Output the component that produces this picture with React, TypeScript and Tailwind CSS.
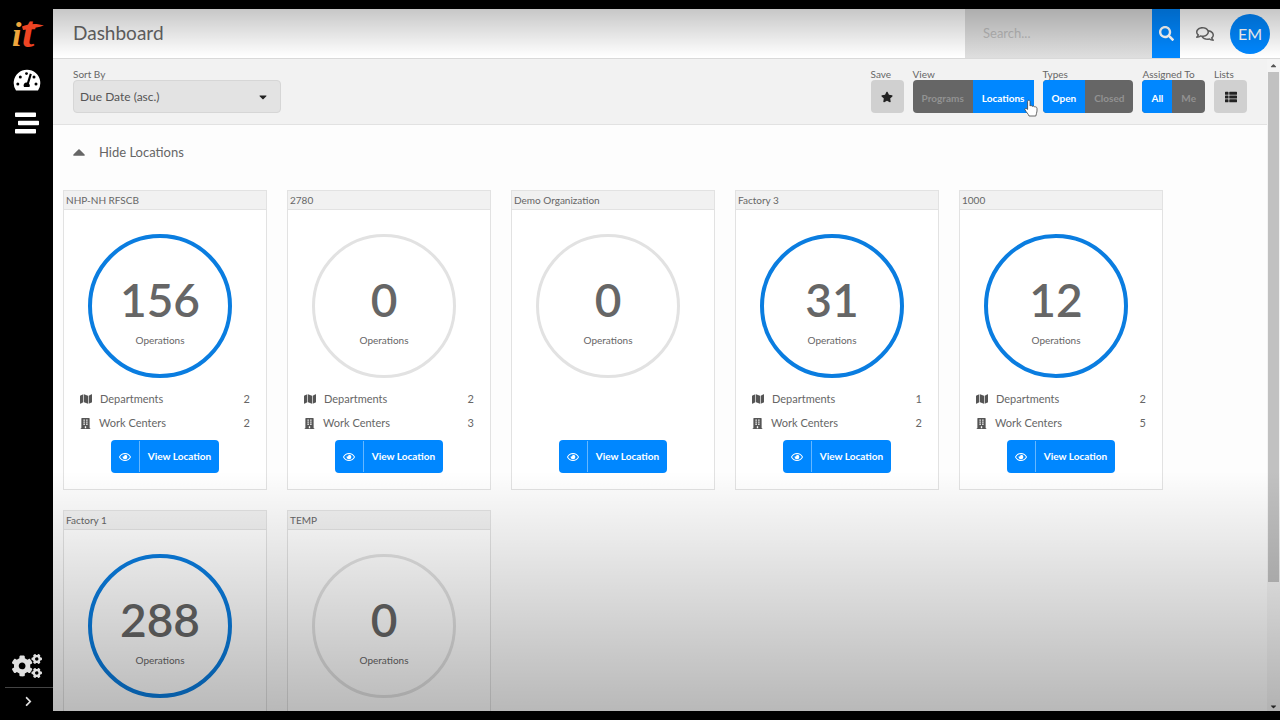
import type { ReactNode } from 'react';
import clsx from 'clsx';
import {
  FaBuilding,
  FaCaretDown,
  FaCaretUp,
  FaChevronRight,
  FaCogs,
  FaMap,
  FaRegComments,
  FaRegEye,
  FaSearch,
  FaStar,
  FaStream,
  FaThList,
} from 'react-icons/fa';

interface Location {
  name: string;
  operations: number;
  departments?: number;
  workCenters?: number;
}

const LOCATIONS: Location[] = [
  { name: 'NHP-NH RFSCB', operations: 156, departments: 2, workCenters: 2 },
  { name: '2780', operations: 0, departments: 2, workCenters: 3 },
  { name: 'Demo Organization', operations: 0 },
  { name: 'Factory 3', operations: 31, departments: 1, workCenters: 2 },
  { name: '1000', operations: 12, departments: 2, workCenters: 5 },
  { name: 'Factory 1', operations: 288 },
  { name: 'TEMP', operations: 0 },
];

function Logo() {
  return (
    <svg viewBox="0 0 36 48" className="h-12 w-9" role="img" aria-label="it">
      <g fontFamily="'Liberation Serif', serif" fontStyle="italic" fontWeight="700">
        <text x="3" y="37" fontSize="34" fill="#f0a63c">
          i
        </text>
        <text x="13" y="38" fontSize="44" fill="#ee4423">
          t
        </text>
      </g>
      <path d="M13 17.500C19 14.500 28 14 35 16.500C31 18 22 19.500 14 21Z" fill="#ee4423" />
    </svg>
  );
}

function GaugeIcon() {
  return (
    <svg viewBox="0 0 28 22" className="h-[22px] w-7" aria-hidden="true">
      <path d="M3 21.500A13.300 13.300 0 1 1 25 21.500Z" fill="#fff" />
      <g fill="#000">
        <circle cx="4.800" cy="15" r="1.500" />
        <circle cx="7.300" cy="8" r="1.500" />
        <circle cx="13.500" cy="4.600" r="1.400" />
        <circle cx="21" cy="8" r="1.500" />
        <circle cx="23" cy="15" r="1.500" />
        <path d="M16.800 4.500L18.800 5.200L16 14.500A3 3 0 0 1 16.500 18H11A3 3 0 0 1 14 13.500Z" />
      </g>
    </svg>
  );
}

function PointerHand() {
  return (
    <svg viewBox="0 0 14 18" className="pointer-events-none absolute -right-1 -bottom-1 h-[18px] w-3.5" aria-hidden="true">
      <path
        d="M4 1.500C5 .8 6 1.500 6 2.500V7C6.500 6.300 8 6.400 8.300 7.400C9 6.800 10.300 7 10.600 8C11.500 7.500 13 8 13 9.500V12C13 14 12 15 11.800 17H5C4.500 15 2 13 1 10.800C.5 9.500 2 8.800 3.600 10.400V2.500C3.600 2 3.700 1.700 4 1.500Z"
        fill="#fff"
        stroke="#444"
        strokeWidth=".8"
      />
    </svg>
  );
}

function Sidebar() {
  return (
    <nav className="flex w-[53px] shrink-0 flex-col items-center bg-black text-white">
      <a href="#home">
        <Logo />
      </a>
      <a href="#dashboard" aria-label="Dashboard" className="mt-3">
        <GaugeIcon />
      </a>
      <a href="#programs" aria-label="Programs" className="mt-5">
        <FaStream size={24} />
      </a>
      <a href="#settings" aria-label="Settings" className="mt-auto mb-1.5 text-[#e0e0e0]">
        <FaCogs size={30} />
      </a>
      <button
        aria-label="Expand menu"
        className="ml-1 flex h-6 w-12 items-center justify-center border-t border-[#444] pt-1 text-[#e0e0e0]"
      >
        <FaChevronRight size={11} />
      </button>
    </nav>
  );
}

function Header() {
  return (
    <header className="flex h-[50px] shrink-0 items-center border-b border-[#d9d9d9] bg-white pr-2.5 pl-5">
      <h1 className="text-[19px] text-[#666]">Dashboard</h1>
      <div className="ml-auto flex self-stretch">
        <input
          type="search"
          aria-label="Search"
          placeholder="Search..."
          className="w-[187px] bg-[#dedede] px-[18px] text-[13px] outline-none placeholder:text-[#b9b9b9]"
        />
        <button aria-label="Search" className="flex w-7 items-center justify-center bg-[#0087ff] text-white">
          <FaSearch size={15} />
        </button>
      </div>
      <button aria-label="Messages" className="mx-4 text-[#666]">
        <FaRegComments size={18} />
      </button>
      <button className="size-10 rounded-full bg-[#0087ff] text-[16px] text-white">EM</button>
    </header>
  );
}

function Field({ label, children }: { label: string; children: ReactNode }) {
  return (
    <div role="group" aria-label={label}>
      <div className="text-[10px] leading-3 text-[#666]">{label}</div>
      {children}
    </div>
  );
}

function Segmented({ options, active, children }: { options: string[]; active: string; children?: ReactNode }) {
  return (
    <div className="relative flex h-[33px] rounded bg-[#666]">
      {options.map((option) => (
        <button
          key={option}
          aria-pressed={option === active}
          className={clsx(
            'px-[9px] pt-1 text-[10px] font-bold first:rounded-l last:rounded-r',
            option === active ? 'bg-[#0087ff] text-white' : 'text-[#929292]',
          )}
        >
          {option}
        </button>
      ))}
      {children}
    </div>
  );
}

function Toolbar() {
  return (
    <div className="flex justify-between border-b border-[#e2e2e2] bg-[#f2f2f2] px-5 pt-[9px] pb-[11px]">
      <div>
        <label htmlFor="sort" className="block text-[10px] leading-3 text-[#666]">
          Sort By
        </label>
        <div className="relative">
          <select
            id="sort"
            className="h-[33px] w-[208px] appearance-none rounded border border-[#d6d6d6] bg-[#e3e3e3] px-1.5 text-[12px] text-[#555]"
          >
            <option>Due Date (asc.)</option>
          </select>
          <FaCaretDown size={12} className="pointer-events-none absolute top-[11px] right-3 text-[#222]" />
        </div>
      </div>
      <div className="flex gap-[9px]">
        <Field label="Save">
          <button aria-label="Save" className="flex h-[33px] w-[33px] items-center justify-center rounded bg-[#d0d0d0] text-[#222]">
            <FaStar size={12} />
          </button>
        </Field>
        <Field label="View">
          <Segmented options={['Programs', 'Locations']} active="Locations">
            <PointerHand />
          </Segmented>
        </Field>
        <Field label="Types">
          <Segmented options={['Open', 'Closed']} active="Open" />
        </Field>
        <Field label="Assigned To">
          <Segmented options={['All', 'Me']} active="All" />
        </Field>
        <Field label="Lists">
          <button aria-label="Lists" className="flex h-[33px] w-[33px] items-center justify-center rounded bg-[#d0d0d0] text-[#222]">
            <FaThList size={12} />
          </button>
        </Field>
      </div>
    </div>
  );
}

function LocationCard({ name, operations, departments, workCenters }: Location) {
  return (
    <article className="flex h-[300px] w-[204px] flex-col border border-[#e2e2e2] bg-white">
      <h2 className="border-b border-[#e2e2e2] bg-[#f1f1f1] px-0.5 text-[10px] leading-[18px] text-[#666]">{name}</h2>
      <div
        className={clsx(
          'mt-6 ml-6 flex size-36 flex-col items-center justify-center rounded-full text-[#666]',
          operations > 0 ? 'border-4 border-[#0a7de0]' : 'border-3 border-[#e2e2e2]',
        )}
      >
        <span className="mt-2 text-[46px] leading-[60px] font-semibold">{operations}</span>
        <span className="text-[10px] leading-5">Operations</span>
      </div>
      {departments !== undefined && (
        <dl className="mt-2 px-4 pt-px text-[11px] leading-6 text-[#666]">
          <div className="flex items-center">
            <FaMap size={12} className="mr-2 text-[#555]" />
            <dt>Departments</dt>
            <dd className="ml-auto">{departments}</dd>
          </div>
          <div className="flex items-center">
            <FaBuilding size={11} className="mr-2 text-[#555]" />
            <dt>Work Centers</dt>
            <dd className="ml-auto">{workCenters}</dd>
          </div>
        </dl>
      )}
      <button className="mx-auto mt-auto mb-4 flex h-[33px] items-center rounded bg-[#0087ff] text-[10px] font-bold text-white">
        <span className="flex w-7 justify-center">
          <FaRegEye size={12} />
        </span>
        <span className="border-l border-[#66b7ff] px-2 py-2">View Location</span>
      </button>
    </article>
  );
}

function Scrollbar() {
  return (
    <div className="flex w-[13px] shrink-0 flex-col items-center bg-[#f4f4f4] text-[#555]" aria-hidden="true">
      <FaCaretUp size={9} className="my-0.5 shrink-0" />
      <div className="h-[510px] w-[11px] bg-[#c1c1c1]" />
      <FaCaretDown size={9} className="mt-auto text-[#333]" />
    </div>
  );
}

export default function App() {
  return (
    <div className="flex h-screen bg-black py-[9px] font-['Lato',sans-serif]">
      <Sidebar />
      <div className="relative flex min-w-0 flex-1 flex-col bg-[#fdfdfd]">
        <Header />
        <div className="flex min-h-0 flex-1">
          <main className="min-w-0 flex-1 overflow-y-auto [scrollbar-width:none]">
            <Toolbar />
            <button className="flex items-center gap-2.5 px-5 pt-[17px] text-[13px] leading-5 text-[#666]">
              <FaCaretUp size={20} className="-ml-1 w-5" />
              Hide Locations
            </button>
            <div className="flex flex-wrap gap-5 px-2.5 pt-7">
              {LOCATIONS.map((location) => (
                <LocationCard key={location.name} {...location} />
              ))}
            </div>
          </main>
          <Scrollbar />
        </div>
        <div className="pointer-events-none absolute inset-x-0 top-0 h-12 bg-gradient-to-b from-black/22 to-transparent" />
        <div className="pointer-events-none absolute inset-x-0 bottom-0 h-60 bg-gradient-to-t from-black/27 to-transparent" />
      </div>
    </div>
  );
}
